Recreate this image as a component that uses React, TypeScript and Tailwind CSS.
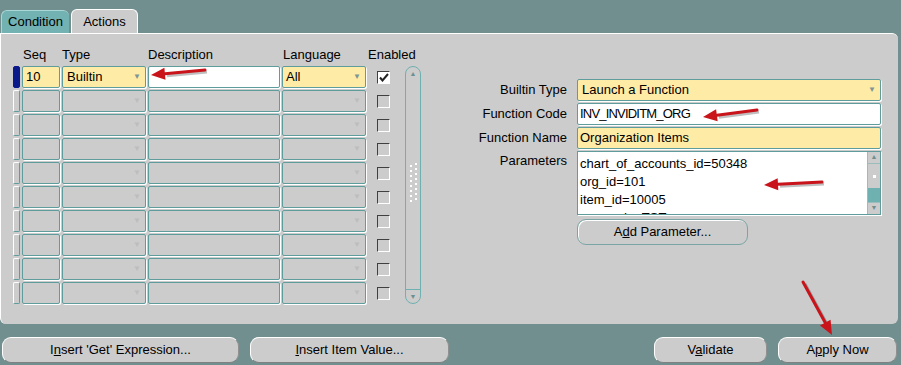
import React from 'react';

const font = { fontFamily: '"Liberation Sans", Arial, sans-serif' };

const fieldBase =
  'h-[22px] border border-[#5f9c9c] shadow-[1px_1px_0_#ffffff] rounded-[2px] flex items-center';

const Drop: React.FC<{ faint?: boolean }> = ({ faint }) => (
  <span className={`ml-auto mr-[4px] text-[8px] leading-none ${faint ? 'text-[#bdbdbd]' : 'text-[#7f9595]'}`}>▼</span>
);

const Check: React.FC<{ on?: boolean }> = ({ on }) => (
  <div
    className={`w-[13px] h-[13px] border-t border-l border-t-[#404040] border-l-[#404040] border-b border-r border-b-white border-r-white flex items-center justify-center ${on ? 'bg-white' : ''}`}
  >
    {on && (
      <svg width="10" height="9" viewBox="0 0 10 9">
        <path d="M1 4.5 L3.5 7.5 L9 1" stroke="#222" strokeWidth="2" fill="none" />
      </svg>
    )}
  </div>
);

const Arrow: React.FC<{ className: string; w: number; h: number; x1: number; y1: number; x2: number; y2: number }> = ({ className, w, h, x1, y1, x2, y2 }) => {
  const ang = Math.atan2(y2 - y1, x2 - x1);
  const L = 14;
  const W = 6;
  const bx = x2 - L * Math.cos(ang);
  const by = y2 - L * Math.sin(ang);
  const px = -Math.sin(ang) * W;
  const py = Math.cos(ang) * W;
  return (
    <svg className={className} width={w} height={h} viewBox={`0 0 ${w} ${h}`}>
      <line x1={x1 + 2} y1={y1 + 2} x2={bx + 2} y2={by + 2} stroke="rgba(0,0,0,0.25)" strokeWidth="3" />
      <line x1={x1} y1={y1} x2={bx} y2={by} stroke="#c8141a" strokeWidth="3" strokeLinecap="round" />
      <polygon points={`${x2},${y2} ${bx + px},${by + py} ${bx - px},${by - py}`} fill="#c8141a" />
    </svg>
  );
};

const Btn: React.FC<{ w: string; children: React.ReactNode }> = ({ w, children }) => (
  <div
    className={`${w} h-[26px] bg-[#cccccc] rounded-[9px] border-t border-l border-white border-b border-r border-b-[#808080] border-r-[#909090] flex items-center justify-center text-[13px] text-black`}
  >
    {children}
  </div>
);

export default function App() {
  const rows = Array.from({ length: 10 }, (_, i) => i);
  return (
    <div style={font} className="w-[901px] h-[365px] bg-[#728f8f] flex flex-col overflow-hidden text-[13px] text-black">
      <div className="flex items-end h-[33px] pl-[1px] gap-[2px]">
        <div className="w-[68px] h-[23px] bg-[#72b2b2] rounded-t-[6px] border-t border-l border-[#a9d6d6] flex items-center justify-center">
          Condition
        </div>
        <div className="w-[67px] h-[25px] bg-[#cccccc] rounded-t-[6px] border-t border-l border-r border-white flex items-center justify-center mb-[-1px]">
          Actions
        </div>
      </div>
      <div className="relative h-[291px] bg-[#cccccc] rounded-[6px] rounded-tl-none border-t border-l border-white mr-[3px] flex">
        <div className="pl-[12px] pt-[13px]">
          <div className="flex h-[17px] items-end">
            <span className="ml-[10px] w-[39px]">Seq</span>
            <span className="w-[86px]">Type</span>
            <span className="w-[135px]">Description</span>
            <span className="w-[86px]">Language</span>
            <span className="-ml-[1px]">Enabled</span>
          </div>
          <div className="flex mt-[2px]">
            <div className="flex flex-col gap-[2px]">
              {rows.map((i) => (
                <div key={i} className="flex gap-[2px] items-center">
                  <div
                    className={`w-[7px] h-[22px] rounded-[2px] ${i === 0 ? 'bg-[#0a1a8a] border border-[#0a1a8a]' : 'border-t border-l border-white border-b border-r border-b-[#5f9c9c] border-r-[#5f9c9c]'}`}
                  />
                  <div className={`${fieldBase} w-[38px] pl-[3px] ${i === 0 ? 'bg-[#feeba6]' : ''}`}>{i === 0 ? '10' : ''}</div>
                  <div className={`${fieldBase} w-[84px] pl-[4px] ${i === 0 ? 'bg-[#feeba6]' : ''}`}>
                    {i === 0 ? 'Builtin' : ''}
                    <Drop faint={i !== 0} />
                  </div>
                  <div className={`${fieldBase} w-[132px] ${i === 0 ? 'bg-white' : ''}`} />
                  <div className={`${fieldBase} w-[84px] pl-[3px] ${i === 0 ? 'bg-[#feeba6]' : ''}`}>
                    {i === 0 ? 'All' : ''}
                    <Drop faint={i !== 0} />
                  </div>
                  <div className="ml-[9px]">
                    <Check on={i === 0} />
                  </div>
                </div>
              ))}
            </div>
            <div className="ml-[15px] w-[16px] h-[238px] border border-[#6fb0b0] rounded-[8px] flex flex-col items-center justify-between py-[3px]">
              <span className="text-[7px] text-[#6f8f8f] leading-none">▲</span>
              <div className="flex flex-col gap-[3px] items-center">
                {Array.from({ length: 8 }, (_, k) => (
                  <div key={k} className="flex gap-[3px]">
                    <div className="w-[2px] h-[2px] bg-white" />
                    <div className="w-[2px] h-[2px] bg-white mt-[-2px]" />
                  </div>
                ))}
              </div>
              <span className="text-[7px] text-[#6f8f8f] leading-none border-t border-[#6fb0b0] w-full text-center pt-[3px]">▼</span>
            </div>
          </div>
        </div>

        <div className="ml-[51px] pt-[45px] flex flex-col gap-[2px]">
          <div className="flex items-center gap-[10px]">
            <span className="w-[95px] text-right whitespace-nowrap">Builtin Type</span>
            <div className={`${fieldBase} w-[304px] pl-[4px] bg-[#feeba6]`}>
              Launch a Function
              <Drop />
            </div>
          </div>
          <div className="flex items-center gap-[10px]">
            <span className="w-[95px] text-right whitespace-nowrap">Function Code</span>
            <div className={`${fieldBase} w-[304px] pl-[2px] bg-white tracking-[-0.8px]`}>INV_INVIDITM_ORG</div>
          </div>
          <div className="flex items-center gap-[10px]">
            <span className="w-[95px] text-right whitespace-nowrap">Function Name</span>
            <div className={`${fieldBase} w-[304px] pl-[2px] bg-[#feeba6]`}>Organization Items</div>
          </div>
          <div className="flex items-start gap-[10px]">
            <span className="w-[95px] text-right whitespace-nowrap">Parameters</span>
            <div className="w-[304px] h-[64px] border border-[#5f9c9c] shadow-[1px_1px_0_#ffffff] bg-white flex overflow-hidden">
              <div className="flex-1 pl-[2px] pt-[3px] leading-[18px]">
                <div>chart_of_accounts_id=50348</div>
                <div>org_id=101</div>
                <div>item_id=10005</div>
                <div>org_code=TST</div>
              </div>
              <div className="w-[13px] h-full bg-[#cccccc] border-l border-[#9cbcbc] flex flex-col">
                <div className="h-[12px] flex items-center justify-center text-[7px] text-[#6f8f8f] border-b border-[#9cbcbc] rounded-t-[5px]">▲</div>
                <div className="h-[24px] flex items-center justify-center">
                  <div className="w-[3px] h-[3px] bg-white" />
                </div>
                <div className="h-[14px] bg-[#6fb0b0]" />
                <div className="flex-1 flex items-center justify-center text-[7px] text-[#6f8f8f] border-t border-[#9cbcbc]">▼</div>
              </div>
            </div>
          </div>
          <div className="ml-[105px] mt-[2px] w-[171px] h-[26px] rounded-[9px] border border-[#7aa5a5] shadow-[inset_1px_1px_0_#ffffff] flex items-center justify-center">
            <span>A<span className="underline">d</span>d Parameter...</span>
          </div>
        </div>

        <Arrow className="absolute left-[146px] top-[30px]" w={64} h={18} x1={58} y1={6} x2={4} y2={11} />
        <Arrow className="absolute left-[698px] top-[71px]" w={64} h={18} x1={58} y1={5} x2={4} y2={12} />
        <Arrow className="absolute left-[759px] top-[142px]" w={68} h={18} x1={62} y1={6} x2={4} y2={9} />
        <Arrow className="absolute left-[797px] top-[245px]" w={42} h={60} x1={5} y1={3} x2={34} y2={56} />
      </div>
      <div className="flex items-start h-[41px] pt-[13px]">
        <div className="ml-[2px]">
          <Btn w="w-[237px]">
            <span>I<span className="underline">n</span>sert 'Get' Expression...</span>
          </Btn>
        </div>
        <div className="ml-[11px]">
          <Btn w="w-[199px]">
            <span><span className="underline">I</span>nsert Item Value...</span>
          </Btn>
        </div>
        <div className="ml-auto">
          <Btn w="w-[113px]">
            <span>V<span className="underline">a</span>lidate</span>
          </Btn>
        </div>
        <div className="ml-[11px] mr-[4px]">
          <Btn w="w-[119px]">
            <span>A<span className="underline">p</span>ply Now</span>
          </Btn>
        </div>
      </div>
    </div>
  );
}
